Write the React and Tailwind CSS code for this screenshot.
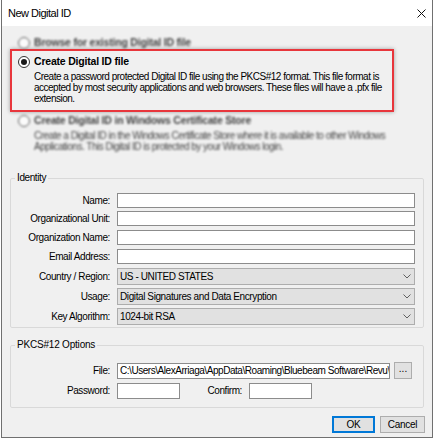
import React from "react";

function Radio({ checked }) {
  return (
    <span className="flex h-[12px] w-[12px] shrink-0 items-center justify-center rounded-full border border-[#333333] bg-white">
      {checked && <span className="h-[6px] w-[6px] rounded-full bg-[#1a1a1a]" />}
    </span>
  );
}

function Option({ title, lines, checked }) {
  return (
    <div className="flex">
      <div className="flex h-[13px] items-center">
        <Radio checked={checked} />
      </div>
      <div className="ml-[4px] flex flex-col">
        <div className="h-[13px] whitespace-nowrap text-[10.5px] font-bold leading-[13px] tracking-[-0.2px]">
          {title}
        </div>
        {lines.length > 0 && (
          <div className="mt-[3px] text-[10px] leading-[11px] tracking-[-0.5px]">
            {lines.map((l) => (
              <div key={l} className="whitespace-nowrap">
                {l}
              </div>
            ))}
          </div>
        )}
      </div>
    </div>
  );
}

function Label({ children }) {
  return (
    <div className="w-[100px] shrink-0 whitespace-nowrap pr-[1px] text-right text-[10px] leading-[12px] tracking-[-0.4px]">
      {children}
    </div>
  );
}

function TextRow({ label, className = "" }) {
  return (
    <div className={"flex items-center " + className}>
      <Label>{label}</Label>
      <div className="ml-[6px] h-[15px] flex-1 border border-[#8c8c8c] bg-white" />
    </div>
  );
}

function SelectRow({ label, value, className = "" }) {
  return (
    <div className={"flex items-center " + className}>
      <Label>{label}</Label>
      <div className="ml-[6px] flex h-[17px] flex-1 items-center justify-between border border-[#adadad] bg-[#e1e1e1] pl-[2px] pr-[3px]">
        <span className="whitespace-nowrap text-[10px] leading-[12px] tracking-[-0.4px]">{value}</span>
        <svg width="8" height="5" viewBox="0 0 8 5" className="shrink-0">
          <path d="M0.5 0.5 L4 4 L7.5 0.5" fill="none" stroke="#606060" strokeWidth="1" />
        </svg>
      </div>
    </div>
  );
}

export default function App() {
  return (
    <div className="h-[439px] w-[434px] bg-white font-['Liberation_Sans',Arial,sans-serif] text-black">
      <div className="ml-[1px] flex h-[438px] w-[432px] flex-col border border-t-0 border-[#707070] bg-[#f0f0f0]">
        {/* Title bar */}
        <div className="flex h-[26px] shrink-0 items-center justify-between bg-white pl-[6px] pr-[6px]">
          <span className="text-[11px] leading-[13px] tracking-[-0.5px]">New Digital ID</span>
          <svg width="9" height="9" viewBox="0 0 9 9">
            <path d="M0.5 0.5 L8.5 8.5 M8.5 0.5 L0.5 8.5" stroke="#111" strokeWidth="1" fill="none" />
          </svg>
        </div>

        {/* Body */}
        <div className="flex flex-col px-[8px]">
          <div className="mt-[10px] pl-[8px] opacity-75 blur-[1.2px]">
            <Option title="Browse for existing Digital ID file" lines={[]} />
          </div>

          <div className="w-[384px] border-2 border-[#e8363c] pb-[6px] pl-[6px] pt-[4px] shadow-[0_0_4px_rgba(0,0,0,0.35)]">
            <Option
              checked
              title="Create Digital ID file"
              lines={[
                "Create a password protected Digital ID file using the PKCS#12 format. This file format is",
                "accepted by most security applications and web browsers. These files will have a .pfx file",
                "extension.",
              ]}
            />
          </div>

          <div className="mt-[2px] pl-[8px] opacity-75 blur-[1.2px]">
            <Option
              title="Create Digital ID in Windows Certificate Store"
              lines={[
                "Create a Digital ID in the Windows Certificate Store where it is available to other Windows",
                "Applications. This Digital ID is protected by your Windows login.",
              ]}
            />
          </div>

          {/* Identity */}
          <fieldset className="mt-[20px] rounded-[2px] border border-[#d9d9d9] pb-[2px] pr-[8px]">
            <legend className="ml-[4px] px-[2px] text-[10px] leading-[12px] tracking-[-0.4px]">Identity</legend>
            <div className="flex flex-col pt-[9px]">
              <TextRow label="Name:" />
              <TextRow label="Organizational Unit:" className="mt-[3px]" />
              <TextRow label="Organization Name:" className="mt-[4px]" />
              <TextRow label="Email Address:" className="mt-[4px]" />
              <SelectRow label="Country / Region:" value="US - UNITED STATES" className="mt-[4px]" />
              <SelectRow label="Usage:" value="Digital Signatures and Data Encryption" className="mt-[3px]" />
              <SelectRow label="Key Algorithm:" value="1024-bit RSA" className="mt-[3px]" />
            </div>
          </fieldset>

          {/* PKCS#12 */}
          <fieldset className="mt-[11px] rounded-[2px] border border-[#d9d9d9] pb-[8px] pr-[10px]">
            <legend className="ml-[4px] px-[2px] text-[10px] leading-[12px] tracking-[-0.2px]">PKCS#12 Options</legend>
            <div className="flex flex-col pt-[11px]">
              <div className="flex items-center">
                <Label>File:</Label>
                <div className="ml-[6px] flex h-[16px] w-[273px] items-center overflow-hidden border border-[#8c8c8c] bg-white pl-[2px]">
                  <span className="whitespace-nowrap text-[10px] leading-[12px] tracking-[-0.45px]">
                    C:\Users\AlexArriaga\AppData\Roaming\Bluebeam Software\Revu\
                  </span>
                </div>
                <div className="ml-[4px] flex h-[17px] w-[18px] items-center justify-center border border-[#adadad] bg-[#e1e1e1] pb-[3px] text-[10px] leading-[10px]">
                  ...
                </div>
              </div>
              <div className="mt-[4px] flex items-center">
                <Label>Password:</Label>
                <div className="ml-[6px] h-[16px] w-[63px] border border-[#8c8c8c] bg-white" />
                <div className="ml-[26px] w-[36px] whitespace-nowrap text-right text-[10px] leading-[12px] tracking-[-0.4px]">
                  Confirm:
                </div>
                <div className="ml-[7px] h-[16px] w-[63px] border border-[#8c8c8c] bg-white" />
              </div>
            </div>
          </fieldset>

          {/* Buttons */}
          <div className="mr-[-1px] mt-[8px] flex justify-end gap-[5px]">
            <div className="flex h-[17px] w-[43px] items-center justify-center border border-[#0078d7] bg-[#e1e1e1] text-[10px] leading-[12px] tracking-[-0.3px] shadow-[inset_0_0_0_1px_#0078d7]">
              OK
            </div>
            <div className="flex h-[17px] w-[45px] items-center justify-center border border-[#adadad] bg-[#e1e1e1] text-[10px] leading-[12px] tracking-[-0.3px]">
              Cancel
            </div>
          </div>
        </div>
      </div>
    </div>
  );
}
